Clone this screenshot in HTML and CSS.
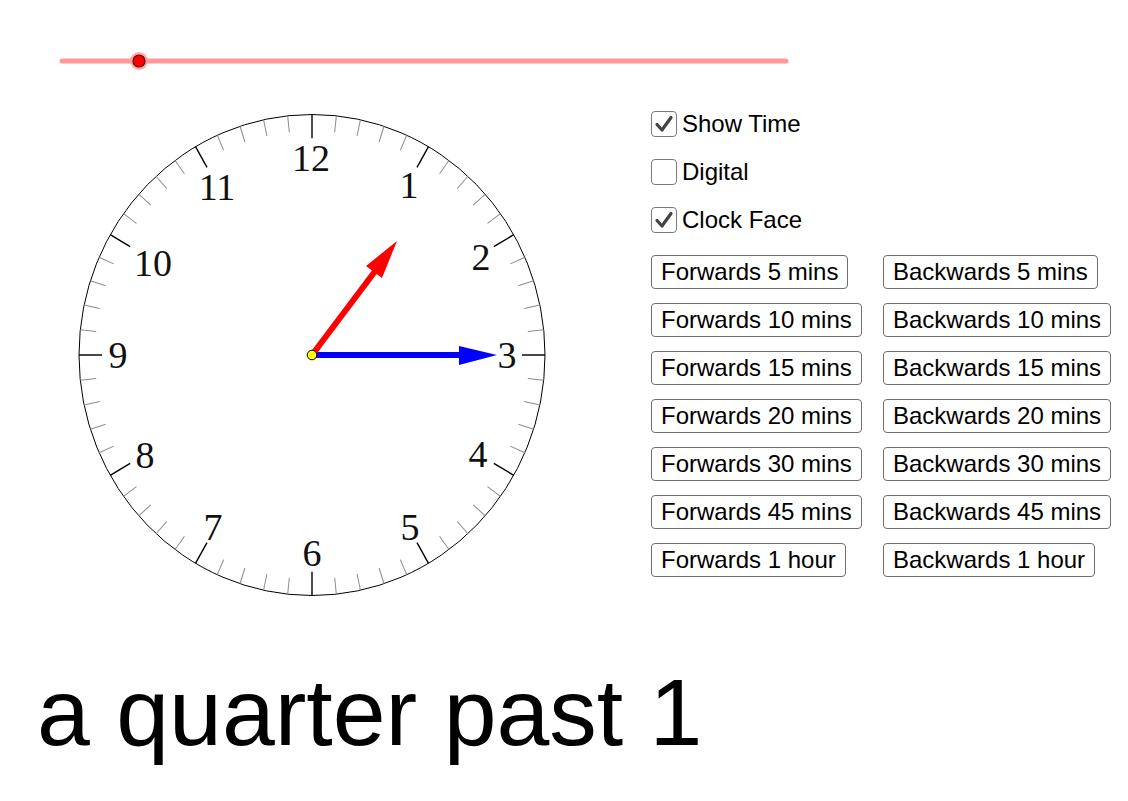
FILE: index.html
```html
<!DOCTYPE html>
<html>
<head>
<meta charset="utf-8">
<link rel="stylesheet" href="styles.css">
</head>
<body>
<div class="page">
  <svg class="slider" width="800" height="100" viewBox="0 0 800 100">
    <line x1="62" y1="61" x2="786" y2="61" stroke="#ff9999" stroke-width="5" stroke-linecap="round"/>
    <circle cx="139" cy="61" r="9" fill="#ff9a9a" opacity="0.85"/>
    <circle cx="139" cy="61" r="6" fill="#ff0000" stroke="#5a1010" stroke-width="1.2"/>
  </svg>
  <div class="main">
    <svg class="clock" width="651" height="566" viewBox="0 100 651 566">
      <ellipse cx="312" cy="355" rx="233" ry="240.5" fill="none" stroke="#000" stroke-width="1"/>
      <g transform="translate(312 355) scale(1 1.0322)" stroke="#8c8c8c" stroke-width="1">
        <line x1="0" y1="-233" x2="0" y2="-217" transform="rotate(6)"/>
        <line x1="0" y1="-233" x2="0" y2="-217" transform="rotate(12)"/>
        <line x1="0" y1="-233" x2="0" y2="-217" transform="rotate(18)"/>
        <line x1="0" y1="-233" x2="0" y2="-217" transform="rotate(24)"/>
        <line x1="0" y1="-233" x2="0" y2="-217" transform="rotate(36)"/>
        <line x1="0" y1="-233" x2="0" y2="-217" transform="rotate(42)"/>
        <line x1="0" y1="-233" x2="0" y2="-217" transform="rotate(48)"/>
        <line x1="0" y1="-233" x2="0" y2="-217" transform="rotate(54)"/>
        <line x1="0" y1="-233" x2="0" y2="-217" transform="rotate(66)"/>
        <line x1="0" y1="-233" x2="0" y2="-217" transform="rotate(72)"/>
        <line x1="0" y1="-233" x2="0" y2="-217" transform="rotate(78)"/>
        <line x1="0" y1="-233" x2="0" y2="-217" transform="rotate(84)"/>
        <line x1="0" y1="-233" x2="0" y2="-217" transform="rotate(96)"/>
        <line x1="0" y1="-233" x2="0" y2="-217" transform="rotate(102)"/>
        <line x1="0" y1="-233" x2="0" y2="-217" transform="rotate(108)"/>
        <line x1="0" y1="-233" x2="0" y2="-217" transform="rotate(114)"/>
        <line x1="0" y1="-233" x2="0" y2="-217" transform="rotate(126)"/>
        <line x1="0" y1="-233" x2="0" y2="-217" transform="rotate(132)"/>
        <line x1="0" y1="-233" x2="0" y2="-217" transform="rotate(138)"/>
        <line x1="0" y1="-233" x2="0" y2="-217" transform="rotate(144)"/>
        <line x1="0" y1="-233" x2="0" y2="-217" transform="rotate(156)"/>
        <line x1="0" y1="-233" x2="0" y2="-217" transform="rotate(162)"/>
        <line x1="0" y1="-233" x2="0" y2="-217" transform="rotate(168)"/>
        <line x1="0" y1="-233" x2="0" y2="-217" transform="rotate(174)"/>
        <line x1="0" y1="-233" x2="0" y2="-217" transform="rotate(186)"/>
        <line x1="0" y1="-233" x2="0" y2="-217" transform="rotate(192)"/>
        <line x1="0" y1="-233" x2="0" y2="-217" transform="rotate(198)"/>
        <line x1="0" y1="-233" x2="0" y2="-217" transform="rotate(204)"/>
        <line x1="0" y1="-233" x2="0" y2="-217" transform="rotate(216)"/>
        <line x1="0" y1="-233" x2="0" y2="-217" transform="rotate(222)"/>
        <line x1="0" y1="-233" x2="0" y2="-217" transform="rotate(228)"/>
        <line x1="0" y1="-233" x2="0" y2="-217" transform="rotate(234)"/>
        <line x1="0" y1="-233" x2="0" y2="-217" transform="rotate(246)"/>
        <line x1="0" y1="-233" x2="0" y2="-217" transform="rotate(252)"/>
        <line x1="0" y1="-233" x2="0" y2="-217" transform="rotate(258)"/>
        <line x1="0" y1="-233" x2="0" y2="-217" transform="rotate(264)"/>
        <line x1="0" y1="-233" x2="0" y2="-217" transform="rotate(276)"/>
        <line x1="0" y1="-233" x2="0" y2="-217" transform="rotate(282)"/>
        <line x1="0" y1="-233" x2="0" y2="-217" transform="rotate(288)"/>
        <line x1="0" y1="-233" x2="0" y2="-217" transform="rotate(294)"/>
        <line x1="0" y1="-233" x2="0" y2="-217" transform="rotate(306)"/>
        <line x1="0" y1="-233" x2="0" y2="-217" transform="rotate(312)"/>
        <line x1="0" y1="-233" x2="0" y2="-217" transform="rotate(318)"/>
        <line x1="0" y1="-233" x2="0" y2="-217" transform="rotate(324)"/>
        <line x1="0" y1="-233" x2="0" y2="-217" transform="rotate(336)"/>
        <line x1="0" y1="-233" x2="0" y2="-217" transform="rotate(342)"/>
        <line x1="0" y1="-233" x2="0" y2="-217" transform="rotate(348)"/>
        <line x1="0" y1="-233" x2="0" y2="-217" transform="rotate(354)"/>
      </g>
      <g transform="translate(312 355) scale(1 1.0322)" stroke="#000" stroke-width="1.4">
        <line x1="0" y1="-233" x2="0" y2="-210"/>
        <line x1="0" y1="-233" x2="0" y2="-210" transform="rotate(30)"/>
        <line x1="0" y1="-233" x2="0" y2="-210" transform="rotate(60)"/>
        <line x1="0" y1="-233" x2="0" y2="-210" transform="rotate(90)"/>
        <line x1="0" y1="-233" x2="0" y2="-210" transform="rotate(120)"/>
        <line x1="0" y1="-233" x2="0" y2="-210" transform="rotate(150)"/>
        <line x1="0" y1="-233" x2="0" y2="-210" transform="rotate(180)"/>
        <line x1="0" y1="-233" x2="0" y2="-210" transform="rotate(210)"/>
        <line x1="0" y1="-233" x2="0" y2="-210" transform="rotate(240)"/>
        <line x1="0" y1="-233" x2="0" y2="-210" transform="rotate(270)"/>
        <line x1="0" y1="-233" x2="0" y2="-210" transform="rotate(300)"/>
        <line x1="0" y1="-233" x2="0" y2="-210" transform="rotate(330)"/>
      </g>
      <g class="nums">
        <text x="311" y="171">12</text>
        <text x="409" y="198">1</text>
        <text x="481" y="270">2</text>
        <text x="507" y="368">3</text>
        <text x="478" y="467">4</text>
        <text x="410" y="540">5</text>
        <text x="312" y="566">6</text>
        <text x="213" y="540">7</text>
        <text x="145" y="468">8</text>
        <text x="118" y="368">9</text>
        <text x="153" y="276">10</text>
        <text x="217" y="200">11</text>
      </g>
      <line x1="312" y1="355" x2="462" y2="355" stroke="#0000ff" stroke-width="6"/>
      <polygon points="459,346 497,355 459,365" fill="#0000ff"/>
      <line x1="312" y1="355" x2="376" y2="270" stroke="#ff0000" stroke-width="6"/>
      <polygon points="366,266 397,241 382,278" fill="#ff0000"/>
      <circle cx="312" cy="355" r="4.8" fill="#ffff00" stroke="#000" stroke-width="1"/>
    </svg>
    <div class="controls">
      <div class="checks">
        <label class="check">
          <span class="box"><svg width="26" height="26" viewBox="0 0 26 26"><polyline points="6,13.5 11,19 20,6.5" fill="none" stroke="#444" stroke-width="3.2" stroke-linecap="round" stroke-linejoin="round"/></svg></span>
          <span class="label">Show Time</span>
        </label>
        <label class="check">
          <span class="box"></span>
          <span class="label">Digital</span>
        </label>
        <label class="check">
          <span class="box"><svg width="26" height="26" viewBox="0 0 26 26"><polyline points="6,13.5 11,19 20,6.5" fill="none" stroke="#444" stroke-width="3.2" stroke-linecap="round" stroke-linejoin="round"/></svg></span>
          <span class="label">Clock Face</span>
        </label>
      </div>
      <div class="buttons">
        <button class="btn">Forwards 5 mins</button>
        <button class="btn">Backwards 5 mins</button>
        <button class="btn">Forwards 10 mins</button>
        <button class="btn">Backwards 10 mins</button>
        <button class="btn">Forwards 15 mins</button>
        <button class="btn">Backwards 15 mins</button>
        <button class="btn">Forwards 20 mins</button>
        <button class="btn">Backwards 20 mins</button>
        <button class="btn">Forwards 30 mins</button>
        <button class="btn">Backwards 30 mins</button>
        <button class="btn">Forwards 45 mins</button>
        <button class="btn">Backwards 45 mins</button>
        <button class="btn">Forwards 1 hour</button>
        <button class="btn">Backwards 1 hour</button>
      </div>
    </div>
  </div>
  <div class="time-text">a quarter past 1</div>
</div>
</body>
</html>
```

FILE: styles.css
```css
html, body {
  margin: 0;
  padding: 0;
  background: #ffffff;
}

.page {
  width: 1128px;
  height: 801px;
  overflow: hidden;
  font-family: "Liberation Sans", Arial, sans-serif;
  color: #000;
}

.slider {
  display: block;
}

.main {
  display: flex;
  height: 566px;
}

.clock {
  display: block;
  flex: none;
}

.nums text {
  font-family: "Liberation Serif", "DejaVu Serif", serif;
  font-size: 38px;
  text-anchor: middle;
  fill: #111;
}

.controls {
  padding-top: 11px;
  display: flex;
  flex-direction: column;
}

.checks {
  display: flex;
  flex-direction: column;
  gap: 22px;
}

.check {
  display: flex;
  align-items: center;
  height: 26px;
  gap: 5px;
}

.box {
  width: 24px;
  height: 24px;
  border: 1px solid #7a7a7a;
  border-radius: 4px;
  position: relative;
  background: #fff;
}

.box svg {
  position: absolute;
  left: -1px;
  top: -1px;
}

.label {
  font-size: 24px;
  line-height: 26px;
}

.buttons {
  margin-top: 22px;
  display: grid;
  grid-template-columns: 232px auto;
  row-gap: 14px;
}

.btn {
  justify-self: start;
  height: 34px;
  padding: 0 9px;
  font-family: "Liberation Sans", Arial, sans-serif;
  font-size: 24px;
  color: #000;
  background: #fff;
  border: 1px solid #6e6e6e;
  border-radius: 4px;
  line-height: 32px;
  white-space: nowrap;
}

.time-text {
  font-size: 95px;
  line-height: 93px;
  padding-left: 37px;
  white-space: nowrap;
}
```
